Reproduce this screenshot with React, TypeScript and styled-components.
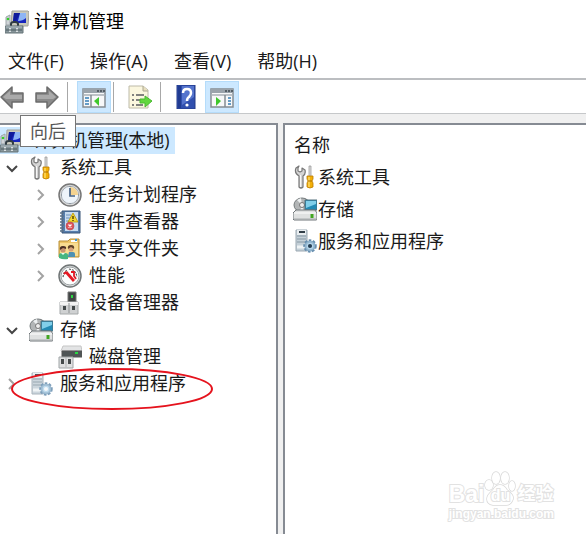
import React from "react";
import styled, { createGlobalStyle } from "styled-components";

const Global = createGlobalStyle`
  * { box-sizing: border-box; }
  body {
    margin: 0;
    background: #fff;
    color: #1a1a1a;
    font: 18px/27px "Open Sans", "Noto Sans CJK SC", sans-serif;
    overflow: hidden;
  }
  button { font: inherit; color: inherit; border: 0; padding: 0; background: none; }
`;

const Window = styled.div`
  position: relative;
  display: flex;
  flex-direction: column;
  min-height: 100vh;
`;

const TitleBar = styled.header`
  display: flex;
  align-items: center;
  gap: 5px;
  height: 43px;
  padding-left: 5px;
`;

const Title = styled.h1`
  margin: 0;
  font-size: 18px;
  font-weight: 400;
  color: #000;
`;

const MenuBar = styled.nav`
  display: flex;
  gap: 26px;
  height: 35px;
  padding: 5px 8px 0;
`;

const MenuItem = styled.button`
  height: 27px;
  white-space: nowrap;
`;

const Toolbar = styled.div`
  display: flex;
  align-items: center;
  height: 36px;
  border-top: 2px solid #bcbec1;
  border-bottom: 1px solid #c6c8ca;
`;

const ToolGroup = styled.div<{ $gap: number }>`
  display: flex;
  gap: ${(p) => p.$gap}px;
`;

const ToolButton = styled.button<{ $active?: boolean }>`
  display: flex;
  align-items: center;
  justify-content: center;
  width: ${(p) => (p.$active ? 34 : 24)}px;
  height: 32px;
  background: ${(p) => (p.$active ? "#cce8ff" : "transparent")};
  border: ${(p) => (p.$active ? "1px solid #b5dcfa" : "0")};
`;

const Separator = styled.span<{ $before: number; $after: number }>`
  width: 1px;
  height: 30px;
  margin: 0 ${(p) => p.$after}px 0 ${(p) => p.$before}px;
  background: #a8a8a8;
`;

const Panes = styled.main`
  display: flex;
  flex: 1;
  gap: 5px;
  padding-top: 9px;
  background: #f0f0f0;
`;

const TreePane = styled.section`
  flex: 0 0 278px;
  background: #fff;
  border: solid #868b93;
  border-width: 2px 2px 0 0;
`;

const ListPane = styled.section`
  flex: 1;
  padding: 4px 8px;
  background: #fff;
  border: solid #868b93;
  border-width: 2px 0 0 2px;
`;

const Tree = styled.ul`
  margin: 0;
  padding: 2px 0 0;
  list-style: none;
`;

const TreeRow = styled.li<{ $level: number }>`
  display: flex;
  align-items: center;
  gap: 5px;
  width: max-content;
  height: 27px;
  padding-left: ${(p) => (p.$level === 2 ? 29 : 0)}px;
  padding-right: 5px;
  background: ${(p) => (p["aria-selected"] ? "#cce8ff" : "transparent")};
  white-space: nowrap;
`;

const Label = styled.span`
  padding-left: 2px;
`;

const Expander = styled.button`
  display: flex;
  align-items: center;
  justify-content: center;
  width: 24px;
  height: 24px;
`;

const ListTable = styled.table`
  border-collapse: collapse;
  text-align: left;
`;

const Heading = styled.th`
  height: 32px;
  padding: 0 0 0 1px;
  font-weight: 400;
`;

const Cell = styled.td`
  height: 32px;
  padding: 0;
`;

const Entry = styled.div`
  display: flex;
  align-items: center;
  gap: 1px;
`;

const Tooltip = styled.div`
  position: absolute;
  left: 20px;
  top: 115px;
  padding: 2px 9px 1px;
  background: #fff;
  border: 1px solid #767676;
  color: #575757;
`;

const Highlight = styled.svg`
  position: absolute;
  left: 10px;
  top: 367px;
  pointer-events: none;
`;

const Watermark = styled.div`
  position: absolute;
  right: 32px;
  bottom: 12px;
  color: #fff;
  font-family: "Liberation Sans", "Noto Sans CJK SC", sans-serif;
  font-weight: 700;
  -webkit-text-stroke: 2px #e2e2e2;
  paint-order: stroke fill;
`;

const Brand = styled.div`
  display: flex;
  align-items: flex-end;
  height: 36px;
  font-size: 23px;
  line-height: 23px;
`;

const Paw = styled.div`
  display: grid;
  place-items: end center;
  width: 32px;
  height: 36px;
  font-size: 16px;
  line-height: 20px;
  > * { grid-area: 1 / 1; }
`;

const BrandSuffix = styled.span`
  padding-left: 1px;
  font-size: 18px;
`;

const Site = styled.div`
  font-size: 12px;
  line-height: 16px;
`;

const Icon = ({ children }: { children: React.ReactNode }) => (
  <svg width="24" height="24" viewBox="0 0 24 24" aria-hidden="true">
    {children}
  </svg>
);

const ComputerIcon = () => (
  <Icon>
    <path d="M7 1h16l1 1-1 14H6z" fill="#c9c9bc" stroke="#a3a39a" />
    <path d="M9 3h12v10H8z" fill="#1725bd" />
    <path d="M15 3h6v5c-2 2-5 3-8 3z" fill="#8eb5f5" />
    <path d="M9 3h6l-4 8H8z" fill="#101b9b" />
    <path d="M1 7l4-2v10H1z" fill="#d0d4d8" stroke="#9ba4a8" />
    <circle cx="3" cy="9" r="1.3" fill="#36cc29" />
    <path d="M6 17v-3q0-2 3-2h1q3 0 3 2v3" fill="none" stroke="#303c42" strokeWidth="2" />
    <path d="M0 16h18v7H0z" fill="#87959a" stroke="#667479" />
    <path d="M1 17h16" stroke="#b5c2c6" />
    <path d="M5 18v4M12 18v4" stroke="#dae0e2" strokeWidth="2" />
    <path d="M1 20h16" stroke="#4b5a5f" />
  </Icon>
);

const ToolsIcon = () => (
  <Icon>
    <path
      d="M6 1L5 3v3l2 1 2-1V3l3 2q1 4-2 6v11q-2 2-4 0V11Q1 8 3 3l3-2z"
      fill="#d5d5d5"
      stroke="#777"
      strokeWidth="1.2"
      strokeLinejoin="round"
    />
    <path d="M7.5 10v12" stroke="#f7f7f7" />
    <path d="M16 1h2v11h-2z" fill="#ddd" stroke="#8f8f8f" strokeWidth=".7" />
    <path d="M14 11h6v3l-1 2 1 2v4q-3 2-6 0v-4l1-2-1-2v-3z" fill="#f2af08" stroke="#bd7c00" strokeWidth=".8" />
    <path d="M16 12v10" stroke="#ffe278" strokeWidth="1.2" />
    <path d="M15 16h4" stroke="#ad6e00" />
  </Icon>
);

const ClockIcon = () => (
  <Icon>
    <circle cx="12" cy="12" r="11" fill="#d9d9d9" stroke="#777" strokeWidth="1.5" />
    <circle cx="12" cy="12" r="8.7" fill="#eef4fa" stroke="#a6adb4" />
    <path d="M12 4a8 8 0 018 8h-8z" fill="#f4d390" />
    <path d="M12 5v8h5" fill="none" stroke="#486384" strokeWidth="1.7" />
    <path d="M12 3v1M12 20v1M3 12h1M20 12h1" stroke="#78838d" />
  </Icon>
);

const EventIcon = () => (
  <Icon>
    <path d="M4 1h18v22H4z" fill="#567eae" stroke="#385577" />
    <path d="M7 2h13v19H7z" fill="#c7dbef" />
    <path d="M8 5h5M8 8h5M8 11h4M8 14h3M8 17h3" stroke="#6c92bd" />
    <path d="M2 3h4M2 6h4M2 9h4M2 12h4M2 15h4M2 18h4M2 21h4" stroke="#5b7188" strokeWidth="1.3" />
    <path d="M15 3l5 9H10z" fill="#f3d835" stroke="#b79600" strokeWidth=".8" />
    <path d="M15 6v3M15 10v1" stroke="#493c00" strokeWidth="1.4" />
    <circle cx="12" cy="16" r="4" fill="#dd5359" stroke="#b94a50" strokeWidth=".6" />
    <path d="M10.5 14.5l3 3m0-3l-3 3" stroke="#fff" strokeWidth="1.3" />
  </Icon>
);

const SharedIcon = () => (
  <Icon>
    <path d="M1 4h9l2-2h9v18H1z" fill="#edc568" stroke="#ba9139" />
    <path d="M13 3h6v2h-6z" fill="#fff" />
    <path d="M17 3h2" stroke="#3f98d0" strokeWidth="2" />
    <path d="M2 6h18v13H2z" fill="#f8dc91" />
    <circle cx="5" cy="13" r="2.6" fill="#c89572" />
    <path d="M2 13q-1-4 3-4t3 3l-3-1z" fill="#4c3025" />
    <path d="M1 21v-3q0-2 3-2h3q3 0 3 2v4q-5 1-9-1z" fill="#45b681" />
    <path d="M3 16l2 2 2-2z" fill="#e9fff4" />
    <circle cx="13" cy="12" r="2.6" fill="#d7a37c" />
    <path d="M10 12q-1-4 3-4t3 4l-3-2z" fill="#624327" />
    <path d="M10 19l1-4h4q2 0 2 2v3h-7z" fill="#4e91b3" />
  </Icon>
);

const PerformanceIcon = () => (
  <Icon>
    <circle cx="12" cy="12" r="11" fill="#d9dcdd" stroke="#717677" strokeWidth="1.5" />
    <circle cx="12" cy="12" r="9" fill="#fbfdfd" stroke="#9da3a5" />
    <path d="M5 13l1-4 3-3M11 5l4 1 3 3 1 4" fill="none" stroke="#555" strokeWidth="1.2" strokeDasharray="2 1" />
    <path d="M8 8l8 9" fill="none" stroke="#e31823" strokeWidth="2.8" />
    <path d="M6 10l2-2M13 8h3v4l2 3" fill="none" stroke="#e31823" strokeWidth="1.8" />
  </Icon>
);

const DeviceIcon = () => (
  <Icon>
    <path d="M10 1h8v10h-8z" fill="#414545" stroke="#777" />
    <path d="M14 4v3" stroke="#2dd944" strokeWidth="2" />
    <path d="M2 11h18v12H2z" fill="#cfd1d2" stroke="#a5a9aa" />
    <path d="M2 11h18v3H2z" fill="#f3f3f3" />
    <path d="M5 15h3v4H5zM14 15h3v4h-3z" fill="#424849" />
    <path d="M11 12v10" stroke="#8d9192" />
  </Icon>
);

const StorageIcon = () => (
  <Icon>
    <ellipse cx="9" cy="8" rx="8" ry="7" fill="#b2b5b6" stroke="#747a7c" />
    <path d="M9 8L4 3l4-2zM9 8l-2 6 4 1z" fill="#edf0f1" />
    <circle cx="9" cy="8" r="2.5" fill="#eee" stroke="#777" />
    <path d="M12 3h12v10H12z" fill="#238ab4" stroke="#55707d" />
    <path d="M13 4h10v3l-10 4z" fill="#81cfea" />
    <path d="M3 13h19l2 3v6q0 1-1 1H1l-1-1v-6z" fill="#dfe1e1" stroke="#71777a" />
    <path d="M1 16h22" stroke="#fff" />
    <path d="M1 22h22" stroke="#a8acae" />
    <path d="M19 17v4" stroke="#42a622" strokeWidth="3" />
  </Icon>
);

const DiskIcon = () => (
  <Icon>
    <path d="M5 1h18l1 5H3z" fill="#e3e4e5" stroke="#c5c5c5" />
    <path d="M4 6h20v6H4z" fill="#4f5556" stroke="#555" />
    <path d="M17 8h3" stroke="#27d944" strokeWidth="2" />
    <path d="M1 12h14v11H1z" fill="#dfe0e1" stroke="#a0a5a7" />
    <path d="M3 14h3v5H3zM10 14h3v5h-3z" fill="#454a4b" />
    <path d="M8 12v10" stroke="#b2b5b7" />
  </Icon>
);

const ServiceIcon = ({ faded }: { faded?: boolean }) => (
  <Icon>
    <g opacity={faded ? 0.85 : 1}>
      <path d="M3 1h11v21H3z" fill="#c4d0d8" stroke="#9ba8b2" />
      <path d="M4 1h9v5H4z" fill="#e8edf0" />
      <path d="M6 3h6" stroke="#303d47" strokeWidth="2" />
      <path d="M4 7h9M4 10h9M4 13h9" stroke="#8798a4" />
      <path d="M4 18h8" stroke="#eef3f5" strokeWidth="3" />
      <circle cx="17" cy="17" r="5.5" fill="#82a9c7" stroke="#688faf" strokeWidth="2.5" strokeDasharray="2.5 1.5" />
      <circle cx="17" cy="17" r="5" fill="#92b5ce" />
      <circle cx="17" cy="17" r="2.7" fill={faded ? "#f4f8fb" : "#253d51"} stroke="#b5d5eb" strokeWidth="1.3" />
    </g>
  </Icon>
);

const ArrowIcon = ({ forward }: { forward?: boolean }) => (
  <Icon>
    <path
      d={forward ? "M1 8h11V2l11 10-11 11v-6H1z" : "M23 8H12V2L1 12l11 11v-6h11z"}
      fill="#8b8b8b"
      stroke="#6c6c6c"
      strokeWidth="1.5"
      strokeLinejoin="round"
    />
    <path d={forward ? "M2 10h12V6l7 6-3 2H2z" : "M22 10H10V6l-7 6 3 2h16z"} fill="#aaa" />
  </Icon>
);

const PanelIcon = ({ right }: { right?: boolean }) => (
  <Icon>
    <path d="M1 4h22v18H1z" fill="#f7f8f9" stroke="#858c92" strokeWidth="1.5" />
    <path d="M1 4h22v4H1z" fill="#9aa3ab" />
    <path d="M15 6h2M18 6h2M21 6h2" stroke="#3f4952" strokeWidth="1.5" />
    <path d="M1 10h22" stroke="#aab1b6" strokeWidth="1.5" />
    <path d={right ? "M15 10v12" : "M9 10v12"} stroke="#858c92" strokeWidth="1.5" />
    <path
      d={right ? "M18 13h3M18 16h3M18 19h3" : "M3 13h4M3 16h4M3 19h4"}
      stroke="#347eb7"
      strokeWidth="1.5"
    />
    <path d={right ? "M6 12l5 4-5 5z" : "M17 12l-5 4 5 5z"} fill="#3fc72c" />
  </Icon>
);

const ExportIcon = () => (
  <Icon>
    <path d="M1 1h14l5 4v18H1z" fill="#fbf7df" stroke="#bdbaa8" />
    <path d="M15 1v5h5" fill="#e8dfbd" stroke="#aaa792" />
    <path d="M4 10h2M4 15h2M4 20h2M8 10h8M8 15h4M8 20h7" stroke="#5a5b60" strokeWidth="1.5" />
    <path d="M12 14h5v-3l7 5-7 6v-4h-5z" fill="#62d73d" stroke="#4bb934" />
  </Icon>
);

const HelpIcon = () => (
  <Icon>
    <path d="M3 0h18v24H3z" fill="#304fae" stroke="#233b89" />
    <path d="M4 1h3v22H4z" fill="#203b91" />
    <path d="M8 1h12v11L8 20z" fill="#5574cd" />
    <path d="M9 8q0-4 4-4t4 4q0 2-2 4-2 1-2 4" fill="none" stroke="#fff" strokeWidth="2.5" />
    <circle cx="13" cy="20" r="1.6" fill="#fff" />
  </Icon>
);

const Chevron = ({ open }: { open?: boolean }) => (
  <Icon>
    <path
      d={open ? "M7 10l5 5 5-5" : "M9 7l5 5-5 5"}
      fill="none"
      stroke={open ? "#454545" : "#a3a3a3"}
      strokeWidth="2"
    />
  </Icon>
);

type Node = { label: string; level: number; icon: React.ReactNode; open?: boolean; leaf?: boolean };

const nodes: Node[] = [
  { label: "系统工具", level: 1, icon: <ToolsIcon />, open: true },
  { label: "任务计划程序", level: 2, icon: <ClockIcon /> },
  { label: "事件查看器", level: 2, icon: <EventIcon /> },
  { label: "共享文件夹", level: 2, icon: <SharedIcon /> },
  { label: "性能", level: 2, icon: <PerformanceIcon /> },
  { label: "设备管理器", level: 2, icon: <DeviceIcon />, leaf: true },
  { label: "存储", level: 1, icon: <StorageIcon />, open: true },
  { label: "磁盘管理", level: 2, icon: <DiskIcon />, leaf: true },
  { label: "服务和应用程序", level: 1, icon: <ServiceIcon faded /> },
];

const LeafSpace = styled.span`
  width: 24px;
`;

const RootLabel = styled(Label)`
  padding-left: 4px;
`;

const entries = [
  { label: "系统工具", icon: <ToolsIcon /> },
  { label: "存储", icon: <StorageIcon /> },
  { label: "服务和应用程序", icon: <ServiceIcon /> },
];

export default function App() {
  return (
    <Window>
      <Global />
      <TitleBar>
        <ComputerIcon />
        <Title>计算机管理</Title>
      </TitleBar>
      <MenuBar>
        {["文件(F)", "操作(A)", "查看(V)", "帮助(H)"].map((m) => (
          <MenuItem key={m}>{m}</MenuItem>
        ))}
      </MenuBar>
      <Toolbar>
        <ToolGroup $gap={11}>
          <ToolButton aria-label="向后"><ArrowIcon /></ToolButton>
          <ToolButton aria-label="向前"><ArrowIcon forward /></ToolButton>
        </ToolGroup>
        <Separator $before={8} $after={9} />
        <ToolButton $active aria-label="显示控制台树"><PanelIcon /></ToolButton>
        <Separator $before={2} $after={14} />
        <ToolButton aria-label="导出列表"><ExportIcon /></ToolButton>
        <Separator $before={8} $after={13} />
        <ToolGroup $gap={7}>
          <ToolButton aria-label="帮助"><HelpIcon /></ToolButton>
          <ToolButton $active aria-label="显示操作窗格"><PanelIcon right /></ToolButton>
        </ToolGroup>
      </Toolbar>
      <Panes>
        <TreePane>
          <Tree role="tree">
            <TreeRow role="treeitem" aria-selected={true} $level={0}>
              <ComputerIcon />
              <RootLabel>计算机管理(本地)</RootLabel>
            </TreeRow>
            {nodes.map((n) => (
              <TreeRow key={n.label} role="treeitem" $level={n.level}>
                {n.leaf ? (
                  <LeafSpace />
                ) : (
                  <Expander aria-label={n.label} aria-expanded={!!n.open}>
                    <Chevron open={n.open} />
                  </Expander>
                )}
                {n.icon}
                <Label>{n.label}</Label>
              </TreeRow>
            ))}
          </Tree>
        </TreePane>
        <ListPane>
          <ListTable>
            <thead>
              <tr>
                <Heading scope="col">名称</Heading>
              </tr>
            </thead>
            <tbody>
              {entries.map((e) => (
                <tr key={e.label}>
                  <Cell>
                    <Entry>
                      {e.icon}
                      {e.label}
                    </Entry>
                  </Cell>
                </tr>
              ))}
            </tbody>
          </ListTable>
        </ListPane>
      </Panes>
      <Tooltip role="tooltip">向后</Tooltip>
      <Highlight width="204" height="44" viewBox="0 0 204 44" aria-hidden="true">
        <ellipse cx="102" cy="22" rx="100" ry="20" fill="none" stroke="#e5131d" strokeWidth="2" />
      </Highlight>
      <Watermark>
        <Brand>
          <span>Bai</span>
          <Paw>
            <svg width="32" height="36" viewBox="0 0 32 36" fill="#fff" stroke="#d9d9d9" strokeWidth="1.5" aria-hidden="true">
              <ellipse cx="5" cy="15" rx="4" ry="5" />
              <ellipse cx="12" cy="8" rx="4" ry="6" />
              <ellipse cx="21" cy="8" rx="4" ry="6" />
              <ellipse cx="28" cy="16" rx="3" ry="5" />
              <path d="M16 15q4 0 7 5 7 5 6 9-2 6-7 6H9q-6-1-6-6 0-4 6-9 3-5 7-5z" />
            </svg>
            <span>du</span>
          </Paw>
          <BrandSuffix>经验</BrandSuffix>
        </Brand>
        <Site>jingyan.baidu.com</Site>
      </Watermark>
    </Window>
  );
}
